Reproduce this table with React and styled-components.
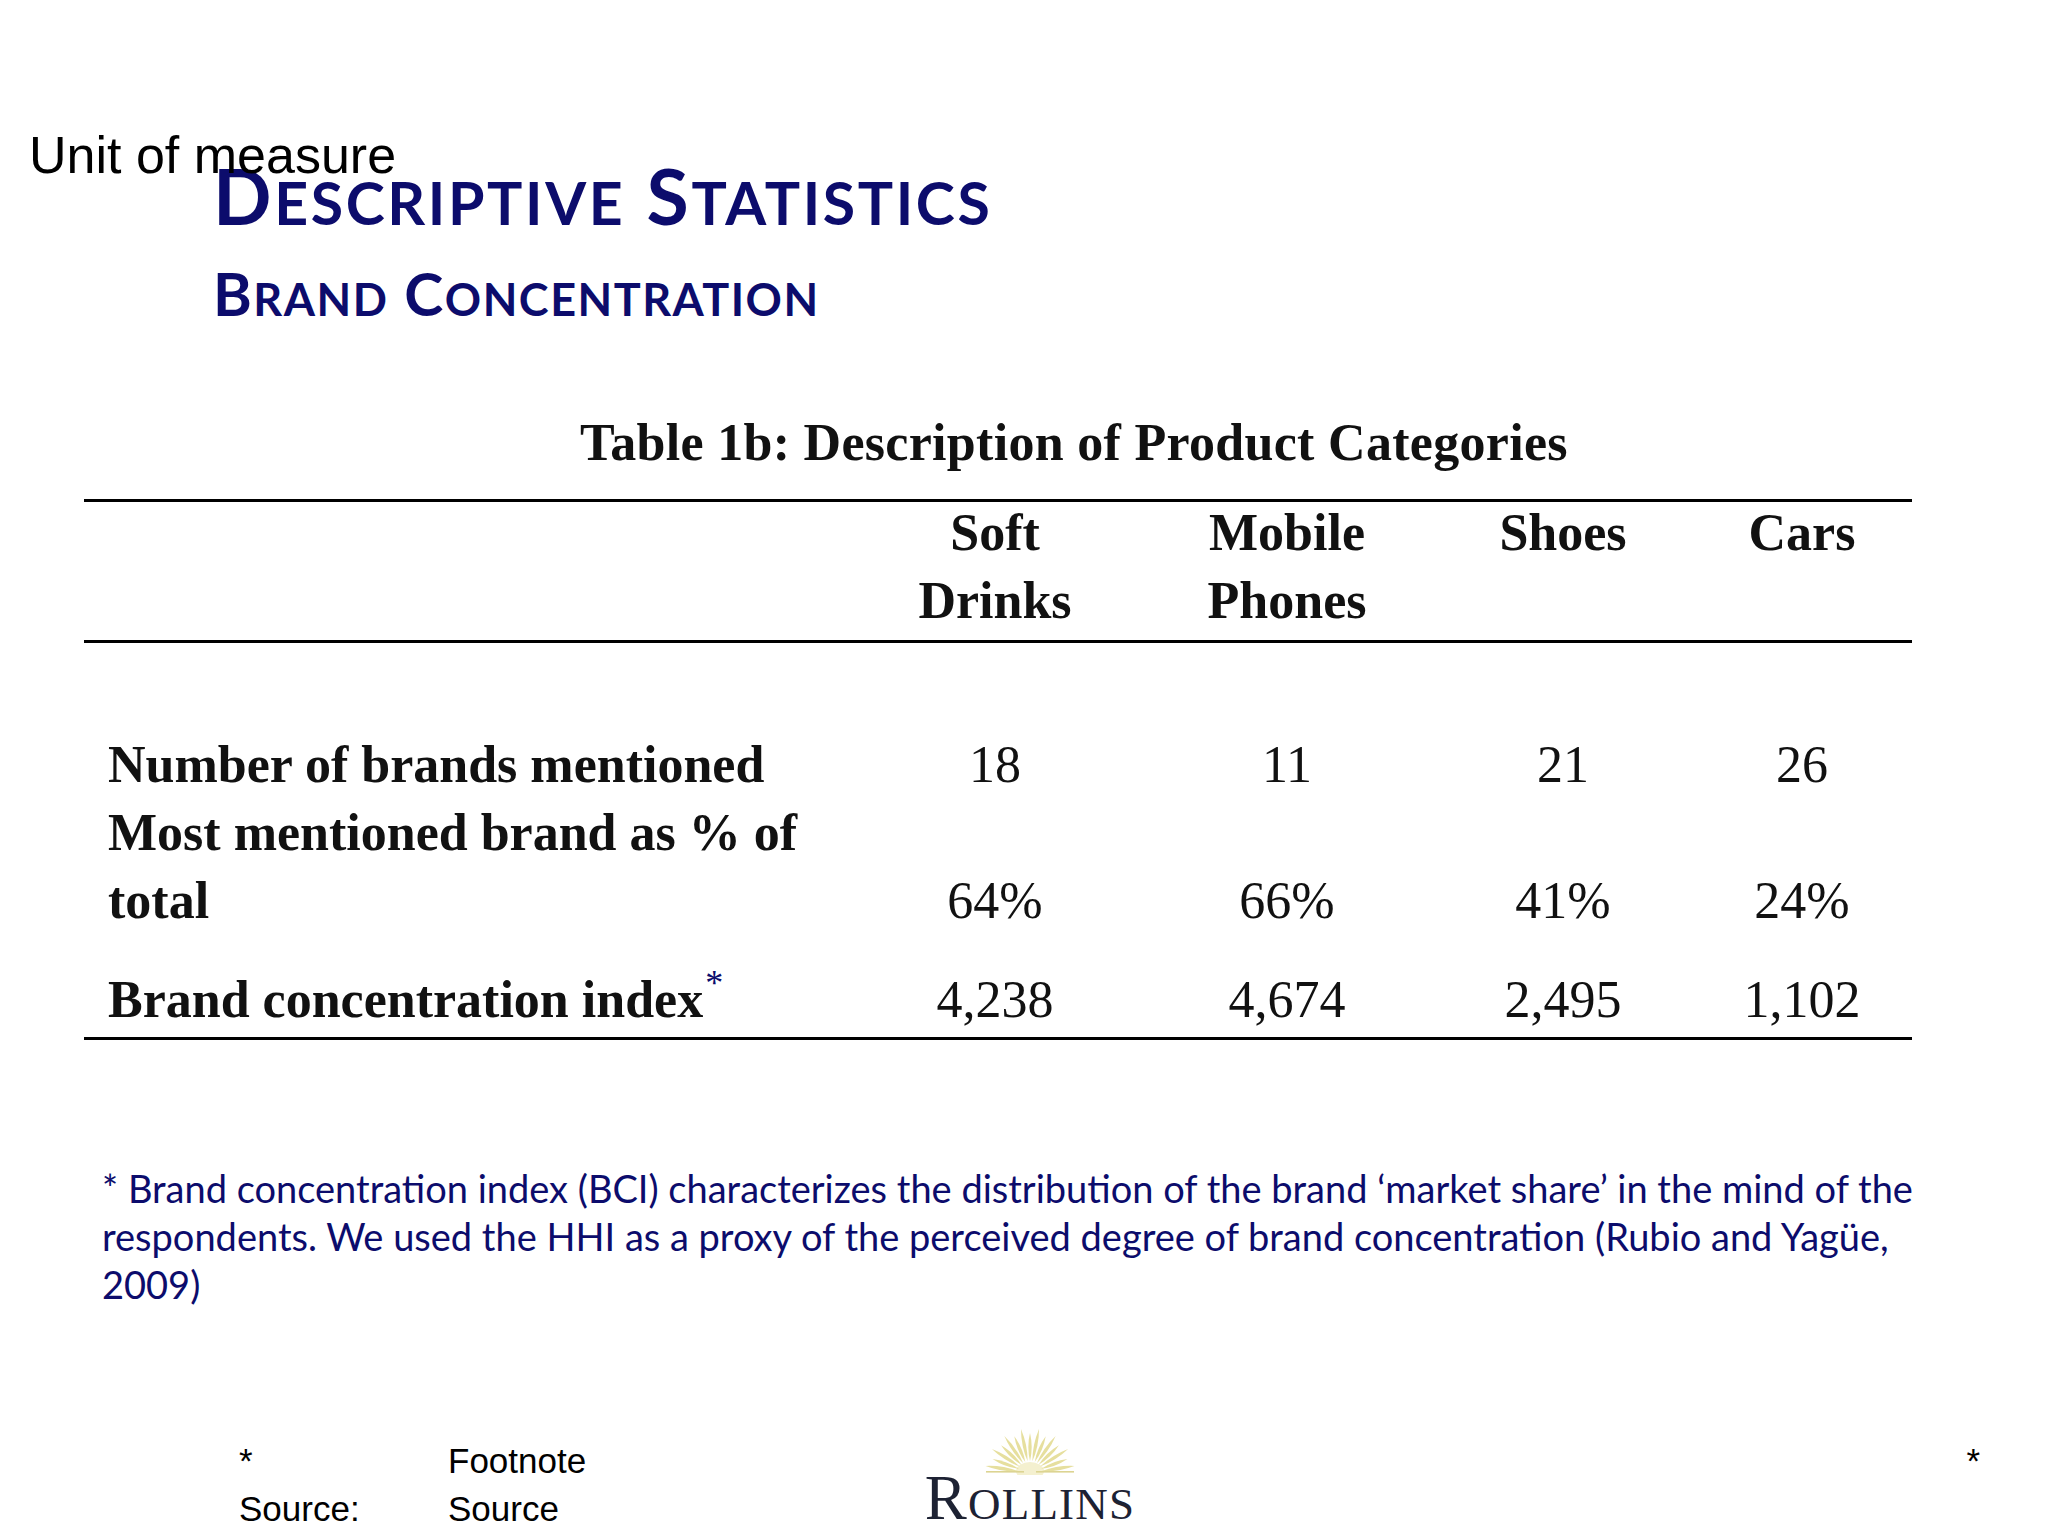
import React from "react";
import styled, { createGlobalStyle } from "styled-components";

const GlobalStyle = createGlobalStyle`
  html, body {
    margin: 0;
    padding: 0;
    background: #ffffff;
  }
`;

const NAVY = "#0c0c6c";

const Slide = styled.div`
  position: relative;
  width: 2048px;
  height: 1536px;
  overflow: hidden;
  background: #ffffff;
`;

const UnitLabel = styled.div`
  position: absolute;
  left: 29px;
  top: 129px;
  font-family: "Liberation Sans", Arial, sans-serif;
  font-size: 52px;
  line-height: 1;
  color: #000;
  z-index: 2;
`;

const Header = styled.div`
  padding: 157px 0 0 213px;
  font-family: Lato, "Open Sans", sans-serif;
  font-weight: 700;
  color: ${NAVY};
`;

const Title = styled.div`
  font-size: 77px;
  line-height: 77px;
  letter-spacing: 2.6px;
  white-space: nowrap;
`;

const Subtitle = styled.div`
  margin-top: 23px;
  font-size: 59px;
  line-height: 59px;
  letter-spacing: 1.5px;
  white-space: nowrap;
`;

const Small = styled.span`
  font-size: ${p => p.size}px;
`;

const Caps = ({ text, big, small }) => (
  <>
    {text.split(" ").map((w, i) => (
      <React.Fragment key={i}>
        {i > 0 && " "}
        <span style={{ fontSize: big }}>{w[0]}</span>
        <Small size={small}>{w.slice(1)}</Small>
      </React.Fragment>
    ))}
  </>
);

const TableTitle = styled.div`
  margin-top: 80px;
  padding-left: 580px;
  font-family: "Liberation Serif", "Times New Roman", serif;
  font-weight: 700;
  font-size: 52px;
  line-height: 68px;
  letter-spacing: 0.3px;
  color: #111;
`;

const Table = styled.div`
  margin: 22px 136px 0 84px;
  font-family: "Liberation Serif", "Times New Roman", serif;
  font-size: 52px;
  line-height: 68px;
  color: #111;
`;

const Row = styled.div`
  display: grid;
  grid-template-columns: 766px 290px 294px 258px 1fr;
  align-items: end;
  margin-top: ${p => p.gap || 0}px;
`;

const HeadRow = styled(Row)`
  align-items: start;
  border-top: 3px solid #000;
  border-bottom: 3px solid #000;
  padding-bottom: 5px;
`;

const Body = styled.div`
  padding: 88px 0 3px;
  border-bottom: 3px solid #000;
`;

const Label = styled.div`
  padding-left: 24px;
  font-weight: 700;
  white-space: nowrap;
`;

const Head = styled.div`
  margin-top: -3px;
  text-align: center;
  font-weight: 700;
`;

const Cell = styled.div`
  text-align: center;
`;

const Star = styled.sup`
  font-size: 36px;
  line-height: 0;
  color: ${NAVY};
  font-weight: 400;
  vertical-align: 22px;
  margin-left: 2px;
`;

const Note = styled.p`
  margin: 124px 0 0 102px;
  font-family: Lato, "Open Sans", sans-serif;
  font-size: 38px;
  line-height: 48px;
  color: ${NAVY};
  white-space: nowrap;
`;

const Footer = styled.div`
  display: flex;
  align-items: flex-start;
  margin-top: 129px;
  padding: 0 68px 0 239px;
  font-family: "Liberation Sans", Arial, sans-serif;
  font-size: 35px;
  line-height: 48px;
  color: #000;
`;

const Notes = styled.div`
  display: grid;
  grid-template-columns: 209px 1fr;
  width: 686px;
`;

const Logo = styled.div`
  display: flex;
  flex-direction: column;
  align-items: center;
  margin-top: -10px;
  width: 210px;
`;

const LogoText = styled.div`
  margin-top: -3px;
  font-family: "Liberation Serif", "Times New Roman", serif;
  font-size: 63px;
  line-height: 52px;
  letter-spacing: 1.2px;
  color: #1d2233;
`;

const Spacer = styled.div`
  flex: 1;
`;

const Sun = () => {
  const cx = 50;
  const cy = 46;
  const rays = [];
  for (let i = 0; i < 15; i++) {
    const a = Math.PI * (0.05 + (0.9 * i) / 14);
    const r1 = 12;
    const r2 = i % 2 ? 40 : 45;
    const ca = Math.cos(a);
    const sa = Math.sin(a);
    const w = 3.4;
    const px = -sa * w;
    const py = -ca * w;
    const x1 = cx - ca * r1;
    const y1 = cy - sa * r1;
    const x2 = cx - ca * r2;
    const y2 = cy - sa * r2;
    const mx = cx - ca * (r1 + r2) * 0.5;
    const my = cy - sa * (r1 + r2) * 0.5;
    rays.push(
      <path
        key={i}
        d={`M${x1} ${y1} Q${mx + px} ${my - py} ${x2} ${y2} Q${mx - px} ${my + py} ${x1} ${y1}Z`}
        fill="#e6df9e"
      />
    );
  }
  return (
    <svg width="100" height="48" viewBox="0 0 100 48">
      <ellipse cx={cx} cy={cy - 2} rx="14" ry="9" fill="#f4f0cf" />
      {rays}
      <rect x="6" y="44" width="38" height="1.6" fill="#dcd492" />
      <rect x="56" y="44" width="38" height="1.6" fill="#dcd492" />
    </svg>
  );
};

const columns = [
  ["Soft", "Drinks"],
  ["Mobile", "Phones"],
  ["Shoes", ""],
  ["Cars", ""]
];

const App = () => (
  <Slide>
    <GlobalStyle />
    <UnitLabel>Unit of measure</UnitLabel>
    <Header>
      <Title>
        <Caps text="DESCRIPTIVE STATISTICS" big={77} small={59} />
      </Title>
      <Subtitle>
        <Caps text="BRAND CONCENTRATION" big={59} small={45} />
      </Subtitle>
    </Header>

    <TableTitle>Table 1b: Description of Product Categories</TableTitle>
    <Table>
      <HeadRow>
        <div />
        {columns.map(([a, b]) => (
          <Head key={a}>
            {a}
            <br />
            {b}
          </Head>
        ))}
      </HeadRow>
      <Body>
        <Row>
          <Label>Number of brands mentioned</Label>
          <Cell>18</Cell>
          <Cell>11</Cell>
          <Cell>21</Cell>
          <Cell>26</Cell>
        </Row>
        <Row>
          <Label>
            Most mentioned brand as % of
            <br />
            total
          </Label>
          <Cell>64%</Cell>
          <Cell>66%</Cell>
          <Cell>41%</Cell>
          <Cell>24%</Cell>
        </Row>
        <Row gap={31}>
          <Label>
            Brand concentration index<Star>*</Star>
          </Label>
          <Cell>4,238</Cell>
          <Cell>4,674</Cell>
          <Cell>2,495</Cell>
          <Cell>1,102</Cell>
        </Row>
      </Body>
    </Table>

    <Note>
      * Brand concentration index (BCI) characterizes the distribution of the brand ‘market share’ in the mind of the
      <br />
      respondents. We used the HHI as a proxy of the perceived degree of brand concentration (Rubio and Yagüe,
      <br />
      2009)
    </Note>

    <Footer>
      <Notes>
        <div>*</div>
        <div>Footnote</div>
        <div>Source:</div>
        <div>Source</div>
      </Notes>
      <Logo>
        <Sun />
        <LogoText>
          R<span style={{ fontSize: 45 }}>OLLINS</span>
        </LogoText>
      </Logo>
      <Spacer />
      <div>*</div>
    </Footer>
  </Slide>
);

export default App;
